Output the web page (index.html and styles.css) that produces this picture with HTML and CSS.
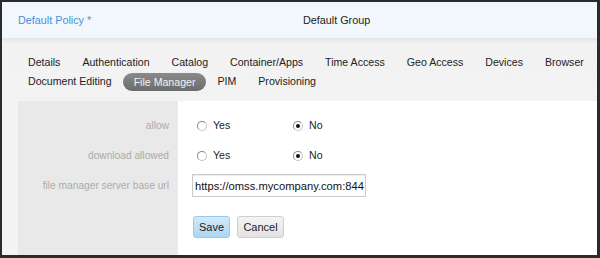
FILE: index.html
```html
<!DOCTYPE html>
<html>
<head>
<meta charset="utf-8">
<link rel="stylesheet" href="styles.css">
</head>
<body>
<div class="frame">
  <header class="hdr">
    <span class="policy">Default Policy *</span>
    <span class="group">Default Group</span>
  </header>
  <nav class="tabs">
    <div class="tab-row">
      <span class="tab">Details</span>
      <span class="tab">Authentication</span>
      <span class="tab">Catalog</span>
      <span class="tab">Container/Apps</span>
      <span class="tab">Time Access</span>
      <span class="tab">Geo Access</span>
      <span class="tab">Devices</span>
      <span class="tab">Browser</span>
    </div>
    <div class="tab-row">
      <span class="tab">Document Editing</span>
      <span class="tab active">File Manager</span>
      <span class="tab">PIM</span>
      <span class="tab">Provisioning</span>
    </div>
  </nav>
  <div class="content">
    <div class="form">
      <div class="label">allow</div>
      <div class="ctrl">
        <span class="opt"><span class="radio"></span>Yes</span>
        <span class="opt"><span class="radio on"></span>No</span>
      </div>
      <div class="label">download allowed</div>
      <div class="ctrl">
        <span class="opt"><span class="radio"></span>Yes</span>
        <span class="opt"><span class="radio on"></span>No</span>
      </div>
      <div class="label">file manager server base url</div>
      <div class="ctrl">
        <input class="url" type="text" value="https://omss.mycompany.com:8443">
      </div>
      <div class="label"></div>
      <div class="ctrl buttons">
        <button class="btn save">Save</button>
        <button class="btn cancel">Cancel</button>
      </div>
    </div>
  </div>
</div>
</body>
</html>
```
FILE: styles.css
```css
html, body {
  margin: 0;
  padding: 0;
}
body {
  width: 600px;
  height: 258px;
  font-family: "Liberation Sans", Arial, sans-serif;
  color: #222;
  overflow: hidden;
}
.frame {
  box-sizing: border-box;
  width: 600px;
  height: 258px;
  border-style: solid;
  border-color: #2b2b2b;
  border-width: 2px 3px 3px 2px;
  display: flex;
  flex-direction: column;
  background: #f4f4f4;
}
.hdr {
  height: 36px;
  flex: none;
  display: flex;
  align-items: center;
  padding-left: 16px;
  background: #f1f7fd;
  font-size: 10.8px;
}
.policy {
  width: 285px;
  color: #4b92d2;
}
.group {
  color: #222;
}
.tabs {
  flex: none;
  display: flex;
  flex-direction: column;
  padding: 15px 0 10px 15px;
  background: linear-gradient(#e4e4e4, #f2f2f2 5px, #f3f3f3);
  font-size: 10.6px;
  line-height: 19px;
}
.tab-row {
  display: flex;
}
.tab {
  padding: 0 11px;
  color: #222;
  white-space: nowrap;
}
.tab.active {
  height: 18px;
  line-height: 18px;
  margin-top: 1px;
  border-radius: 9px;
  color: #f2f2f2;
  background: linear-gradient(#8a8a8a, #6c6c6c);
}
.content {
  flex: 1;
  display: flex;
  padding-left: 16px;
}
.form {
  flex: 1;
  display: grid;
  grid-template-columns: 160px 1fr;
  grid-template-rows: 30px 30px 31px 1fr;
  padding-top: 9px;
  background: linear-gradient(90deg, #e9e9e9 0, #e9e9e9 160px, #ffffff 160px);
}
.label {
  font-size: 10.2px;
  color: #ababab;
  text-align: right;
  padding-right: 9px;
  display: flex;
  align-items: center;
  justify-content: flex-end;
}
.ctrl {
  display: flex;
  align-items: center;
  padding-left: 14px;
  font-size: 10.6px;
}
.opt {
  width: 96px;
  display: flex;
  align-items: center;
  color: #222;
}
.radio {
  box-sizing: border-box;
  width: 10px;
  height: 10px;
  margin: 1px 6px 0 5px;
  border-radius: 50%;
  border: 1px solid #8a8a8a;
  border-right-color: #c4c4c4;
  border-bottom-color: #c4c4c4;
  background: #fff;
  position: relative;
}
.radio.on::after {
  content: "";
  position: absolute;
  left: 2px;
  top: 2px;
  width: 4px;
  height: 4px;
  border-radius: 50%;
  background: #111;
}
.url {
  box-sizing: border-box;
  width: 174px;
  height: 23px;
  margin: 0;
  padding: 0 1px 0 2px;
  border: 1px solid #c9c9c9;
  box-shadow: inset 0 1px 1px rgba(0,0,0,0.08);
  font-family: "Liberation Sans", Arial, sans-serif;
  font-size: 11.2px;
  color: #111;
  outline: none;
}
.buttons {
  align-items: flex-start;
  padding-top: 15px;
  padding-left: 15px;
  gap: 7px;
}
.btn {
  box-sizing: border-box;
  height: 22px;
  margin: 0;
  padding: 0;
  border-radius: 3px;
  font-family: "Liberation Sans", Arial, sans-serif;
  font-size: 11px;
  color: #222;
  cursor: pointer;
}
.save {
  width: 37px;
  border: 1px solid #9cc9ea;
  background: linear-gradient(#d2eafa, #acd6f2);
}
.cancel {
  width: 47px;
  border: 1px solid #cfcfcf;
  background: linear-gradient(#f4f4f4, #e3e3e3);
}
```
